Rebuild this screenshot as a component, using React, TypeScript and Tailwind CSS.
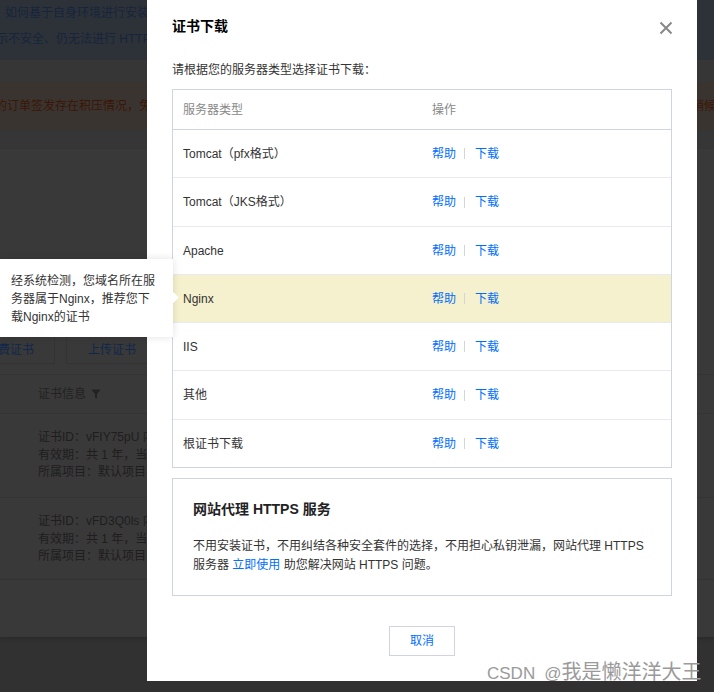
const FONT = "font-['Liberation_Sans','Noto_Sans_CJK_SC',sans-serif]";

const ROWS = [
  { name: "Tomcat（pfx格式）", height: "h-[48px]" },
  { name: "Tomcat（JKS格式）", height: "h-[49px]" },
  { name: "Apache", height: "h-[48px]" },
  { name: "Nginx", height: "h-[48px]", active: true },
  { name: "IIS", height: "h-[48px]" },
  { name: "其他", height: "h-[49px]" },
  { name: "根证书下载", height: "h-[47px]" },
];

const CERTS = [
  { id: "vFIY75pU", height: "h-[84px]" },
  { id: "vFD3Q0ls", height: "h-[82px]" },
];

function Backdrop() {
  return (
    <div className="flex h-full w-full flex-col bg-[#313131] text-xs leading-[18px]">
      {/* notices */}
      <div className="h-[60px] shrink-0 bg-[#2d3238] pl-[5px] pt-[4px] text-[#16253c]">
        <p className="leading-[18px]">如何基于自身环境进行安装部署证书</p>
        <p className="-ml-[9px] mt-2 leading-[18px]">示不安全、仍无法进行 HTTPS 访问</p>
      </div>
      <div className="h-[22px] shrink-0 bg-[#363636]" />
      <div className="flex h-[48px] shrink-0 items-center justify-between bg-[#3a3430] text-[#3a1606]">
        <span className="-ml-[5px]">的订单签发存在积压情况，免</span>
        <span className="-mr-[2px]">稍候</span>
      </div>
      <div className="h-[18px] shrink-0 bg-[#363636]" />
      {/* cert list */}
      <div className="h-[189px] shrink-0 border-t border-[#343434] bg-[#393939]" />
      <div className="flex h-[27px] shrink-0 gap-[11px] bg-[#393939] text-[#10274c]">
        <div className="flex w-[55px] items-center justify-end border-r border-b border-[#333333] pr-[20px]">
          <span className="whitespace-nowrap">费证书</span>
        </div>
        <div className="flex w-[120px] items-center border-l border-b border-[#333333] pl-[21px]">上传证书</div>
      </div>
      <div className="h-[10px] shrink-0 bg-[#393939]" />
      <div className="flex h-[40px] shrink-0 items-center gap-[4px] border-y border-[#343434] bg-[#393939] pl-[38px] text-[#222222]">
        <span>证书信息</span>
        <svg viewBox="0 0 10 10" className="ml-px h-[10px] w-[10px] fill-[#222222]">
          <path d="M0.5 0.5h9L6 5v4.5L4 8.5V5z" />
        </svg>
      </div>
      {CERTS.map((cert) => (
        <div key={cert.id} className={`${cert.height} shrink-0 border-b border-[#343434] bg-[#393939] pl-[38px] pt-[15px] leading-[17.7px] text-[#1e1e1e]`}>
          <p>证书ID：{cert.id} 内</p>
          <p>有效期：共 1 年，当前</p>
          <p>所属项目：默认项目</p>
        </div>
      ))}
      <div className="h-[57px] shrink-0 bg-[#393939] shadow-[0_2px_4px_rgba(0,0,0,0.15)]" />
    </div>
  );
}

function CertTable() {
  return (
    <div className="border border-[#cfd5de] text-xs">
      <div className="flex h-[40px] items-center border-b border-[#cfd5de] text-[#888888]">
        <span className="w-[259px] pl-[10px]">服务器类型</span>
        <span>操作</span>
      </div>
      {ROWS.map((row, i) => (
        <div
          key={row.name}
          className={`flex items-center ${row.height} ${i < ROWS.length - 1 ? "border-b border-[#e7eaef]" : ""} ${row.active ? "bg-[#f5f0cd]" : ""}`}
        >
          <span className="w-[259px] pl-[10px] text-[#333333]">{row.name}</span>
          <a className="text-[#006eff]">帮助</a>
          <span className="mx-[8px] h-[11px] w-px bg-[#d5d5d5]" />
          <a className="ml-[2px] text-[#006eff]">下载</a>
        </div>
      ))}
    </div>
  );
}

function CertModal() {
  return (
    <div className="absolute left-[147px] top-0 h-[681px] w-[550px] bg-white px-[25px]">
      <div className="flex h-[66px] items-start justify-between pt-[16px]">
        <h2 className="text-sm leading-[20px] font-bold text-black">证书下载</h2>
        <button className="-mr-[1px] mt-[5px]" aria-label="关闭">
          <svg viewBox="0 0 14 14" className="h-[14px] w-[14px] stroke-[#888888]" strokeWidth="2" fill="none">
            <path d="M1.5 1.5l11 11M12.5 1.5l-11 11" />
          </svg>
        </button>
      </div>
      <p className="mb-[14px] text-xs leading-[9px] text-[#333333]">请根据您的服务器类型选择证书下载：</p>
      <CertTable />
      <div className="mt-[10px] h-[118px] border border-[#cfd5de] px-[20px] pt-[20px]">
        <h3 className="text-sm leading-[20px] font-bold text-[#222222]">网站代理 HTTPS 服务</h3>
        <p className="mt-[18px] text-xs leading-[19px] text-[#333333]">
          不用安装证书，不用纠结各种安全套件的选择，不用担心私钥泄漏，网站代理 HTTPS 服务器{" "}
          <a className="text-[#006eff]">立即使用</a> 助您解决网站 HTTPS 问题。
        </p>
      </div>
      <div className="mt-[30px] flex justify-center">
        <button className="h-[30px] w-[66px] border border-[#cfd5de] text-xs text-[#006eff]">取消</button>
      </div>
    </div>
  );
}

export default function App() {
  return (
    <div className={`${FONT} relative h-[692px] w-[714px] overflow-hidden`}>
      <Backdrop />
      <CertModal />
      {/* nginx hint */}
      <div className="absolute left-0 top-[259px] h-[78px] w-[173px] bg-white pl-[11px] pt-[13px] text-xs leading-[18px] text-[#333333] shadow-[0_0_8px_rgba(0,0,0,0.12)]">
        <p className="w-[150px]">经系统检测，您域名所在服务器属于Nginx，推荐您下载Nginx的证书</p>
        <span className="absolute right-[-4px] top-[34px] h-[9px] w-[9px] rotate-45 bg-white" />
      </div>
      {/* watermark */}
      <span className="absolute left-[487px] top-[660px] whitespace-nowrap text-[20px] leading-[24px] text-[#9a9a9a]">
        <span className="text-[17px]">CSDN</span>
        <span className="ml-[9px] text-[17px]">@</span>
        我是懒洋洋大王
      </span>
    </div>
  );
}
